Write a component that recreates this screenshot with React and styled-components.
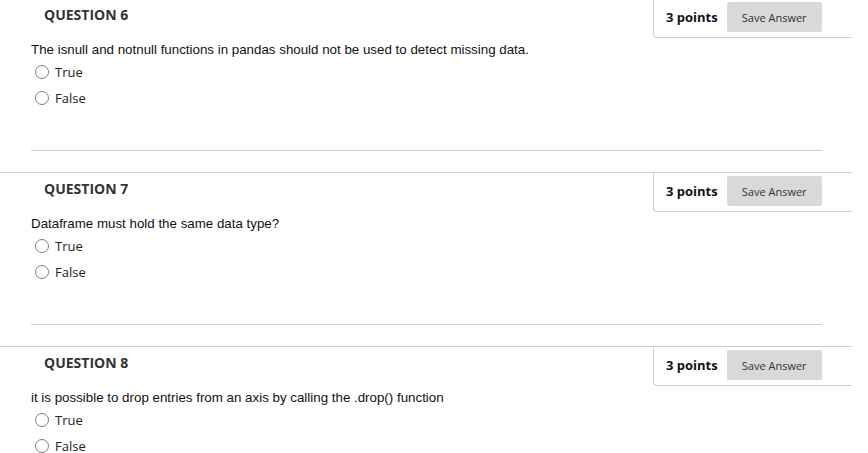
import React from "react";
import styled, { createGlobalStyle } from "styled-components";

const GlobalStyle = createGlobalStyle`
  html, body {
    margin: 0;
    padding: 0;
    background: #fff;
    overflow: hidden;
  }
`;

const Page = styled.div`
  width: 852px;
  margin-top: -2px;
`;

const Block = styled.section`
  display: flex;
  flex-direction: column;
`;

const Header = styled.div`
  display: flex;
  justify-content: space-between;
  align-items: flex-start;
  border-top: 1px solid #cfcfcf;
`;

const Title = styled.h3`
  margin: 0;
  padding: 6px 0 0 44px;
  font-family: "Open Sans", "Liberation Sans", sans-serif;
  font-size: 14px;
  font-weight: 700;
  line-height: normal;
  color: #333;
`;

const PointsBox = styled.div`
  width: 199px;
  box-sizing: border-box;
  display: flex;
  align-items: center;
  gap: 9px;
  padding: 3px 30px 5px 12px;
  border-left: 1px solid #cfcfcf;
  border-bottom: 1px solid #cfcfcf;
  border-bottom-left-radius: 4px;
`;

const Points = styled.span`
  font-family: "Open Sans", "Liberation Sans", sans-serif;
  font-size: 13px;
  font-weight: 700;
  color: #111;
  white-space: nowrap;
`;

const SaveButton = styled.button`
  width: 95px;
  height: 30px;
  border: none;
  border-radius: 2px;
  background: #d9d9d9;
  font-family: "Open Sans", "Liberation Sans", sans-serif;
  font-size: 11px;
  color: #333;
  padding: 0;
  cursor: pointer;
`;

const Prompt = styled.p`
  margin: 4px 0 0 31px;
  font-family: "Liberation Sans", Arial, sans-serif;
  font-size: 13.33px;
  line-height: 15px;
  color: #111;
`;

const Options = styled.div`
  display: flex;
  flex-direction: column;
  margin-top: 2px;
  padding-left: 35px;
`;

const Option = styled.label`
  display: flex;
  align-items: center;
  gap: 6px;
  height: 26px;
  font-family: "Open Sans", "Liberation Sans", sans-serif;
  font-size: 13px;
  color: #222;
  cursor: pointer;
`;

const Radio = styled.span`
  width: 14px;
  height: 14px;
  box-sizing: border-box;
  border: 1px solid #808080;
  border-radius: 50%;
  background: #fff;
  flex-shrink: 0;
`;

const Divider = styled.hr`
  margin: 39px 30px 21px 31px;
  border: none;
  border-top: 1px solid #cfcfcf;
  height: 0;
`;

const questions = [
  {
    n: 6,
    text: "The isnull and notnull functions in pandas should not be used to detect missing data.",
  },
  { n: 7, text: "Dataframe must hold the same data type?" },
  {
    n: 8,
    text: "it is possible to drop entries from an axis by calling the .drop() function",
  },
];

function Question({ n, text }) {
  return (
    <Block>
      <Header>
        <Title>QUESTION {n}</Title>
        <PointsBox>
          <Points>3 points</Points>
          <SaveButton>Save Answer</SaveButton>
        </PointsBox>
      </Header>
      <Prompt>{text}</Prompt>
      <Options>
        <Option>
          <Radio />
          True
        </Option>
        <Option>
          <Radio />
          False
        </Option>
      </Options>
      <Divider />
    </Block>
  );
}

export default function App() {
  return (
    <>
      <GlobalStyle />
      <Page>
        {questions.map((q) => (
          <Question key={q.n} n={q.n} text={q.text} />
        ))}
      </Page>
    </>
  );
}
